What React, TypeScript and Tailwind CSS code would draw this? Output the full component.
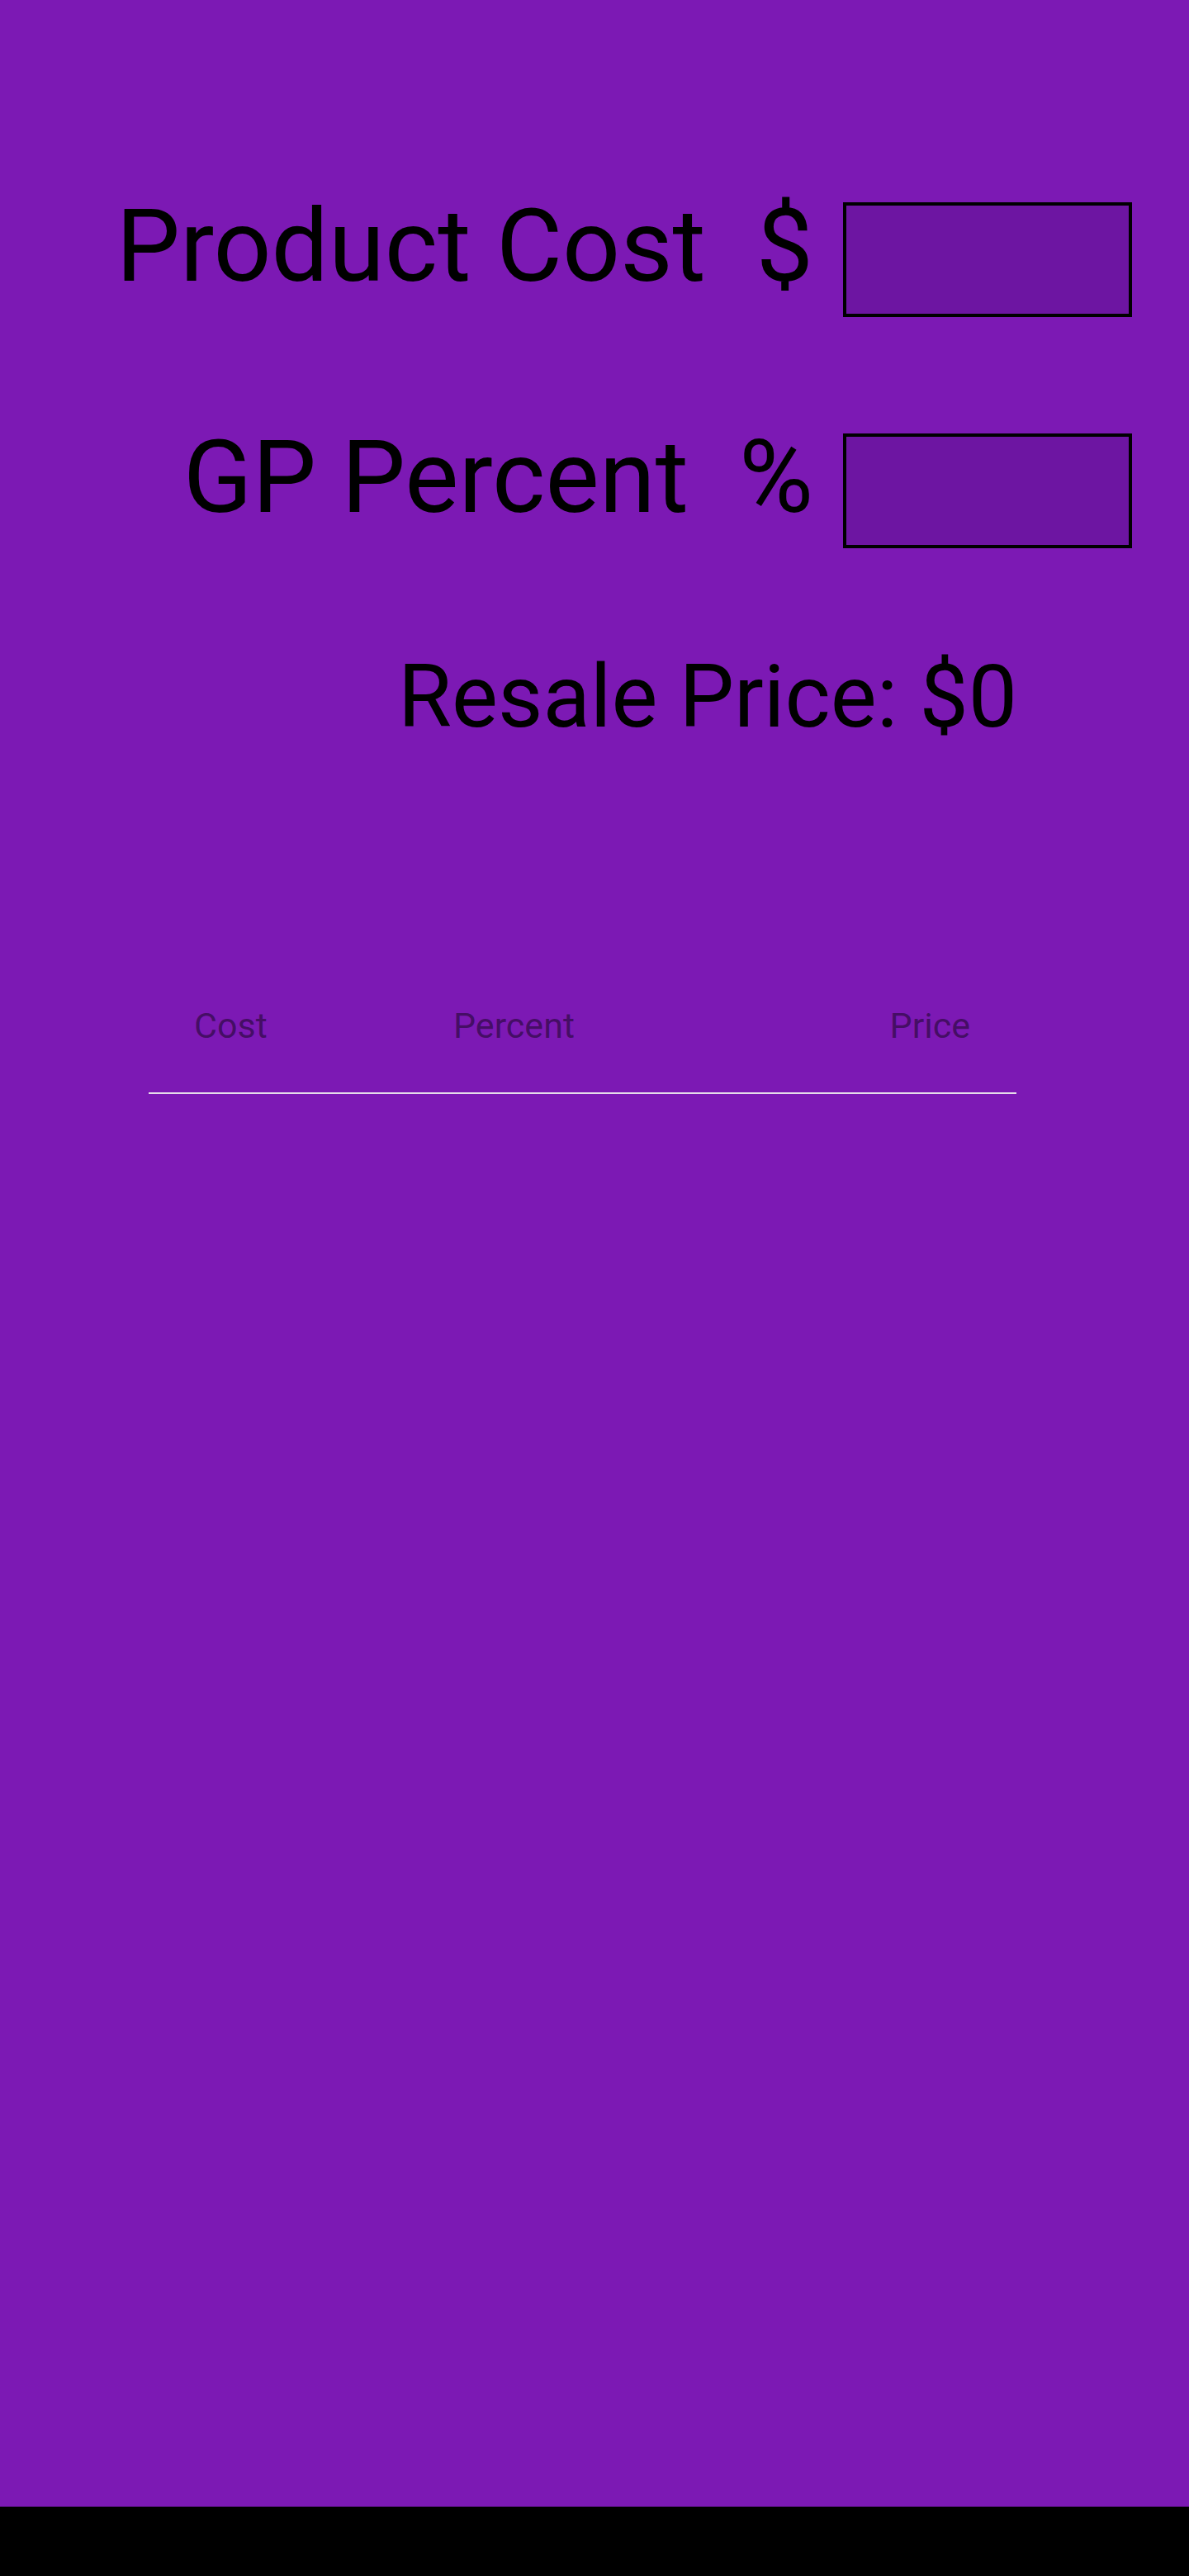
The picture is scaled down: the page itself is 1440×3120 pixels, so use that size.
import { useState } from 'react';

const fields = [
  { id: 'cost', label: 'Product Cost  $' },
  { id: 'percent', label: 'GP Percent  %' },
];

const columns = ['Cost', 'Percent', 'Price'];

export default function App() {
  const [values, setValues] = useState<Record<string, string>>({ cost: '', percent: '' });

  const cost = parseFloat(values.cost) || 0;
  const percent = parseFloat(values.percent) || 0;
  const resale = percent >= 100 ? 0 : cost / (1 - percent / 100);

  return (
    <div className="flex h-[3120px] w-[1440px] flex-col font-['Roboto',sans-serif] text-black">
      <main className="flex-1 bg-[#7c19b4] pt-[226px]">
        <div className="flex flex-col gap-[122px]">
          {fields.map((field) => (
            <div key={field.id} className="flex items-start justify-end pr-[69px]">
              <span className="whitespace-pre text-[123px] leading-[144px]">{field.label}</span>
              <input
                value={values[field.id]}
                onChange={(e) => setValues({ ...values, [field.id]: e.target.value })}
                className="ml-[36px] mt-[19px] h-[139px] w-[350px] border-4 border-black bg-[#6d15a2] px-4 text-[60px] outline-none"
              />
            </div>
          ))}
        </div>

        <div className="mt-[119px] pl-[482px] text-[105.5px] leading-[123px]">
          Resale Price: ${Math.round(resale * 100) / 100}
        </div>

        <div className="ml-[180px] mt-[311px] w-[1051px]">
          <div className="grid grid-cols-[314px_1fr_auto] border-b-2 border-[#e6dcea] pb-[56px] pl-[55px] pr-[56px] text-[43px] font-normal leading-[50px] text-black/45">
            {columns.map((col) => (
              <span key={col}>{col}</span>
            ))}
          </div>
        </div>
      </main>
      <div className="h-[84px] bg-black" />
    </div>
  );
}
